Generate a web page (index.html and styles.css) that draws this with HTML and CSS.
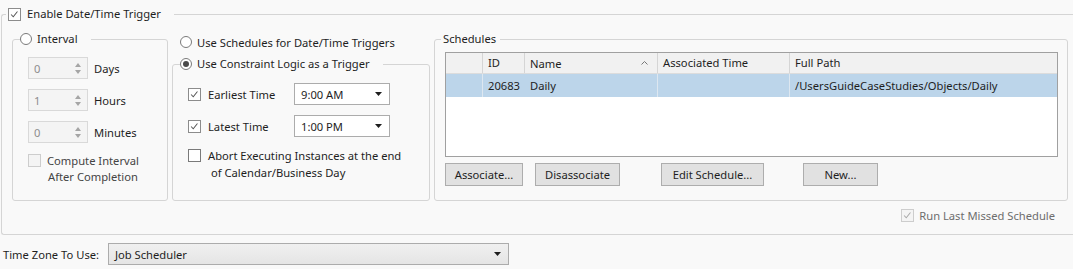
FILE: index.html
```html
<!DOCTYPE html>
<html lang="en">
<head>
  <meta charset="UTF-8">
  <title>Date/Time Trigger</title>
  <link rel="stylesheet" href="styles.css">
</head>
<body>
  <fieldset class="trigger">
    <legend class="trigger-title">
      <span class="cb checked"><svg viewBox="0 0 13 13"><path d="M2.5 6.5 L5 9.2 L10 3"/></svg></span>
      Enable Date/Time Trigger
    </legend>

    <div class="panels">
      <!-- interval (disabled) -->
      <fieldset class="group interval">
        <legend><span class="radio"></span>Interval</legend>
        <div class="spin-row">
          <div class="spin"><span>0</span><span class="arrows"><i class="up"></i><i class="down"></i></span></div>
          <span>Days</span>
        </div>
        <div class="spin-row">
          <div class="spin"><span>1</span><span class="arrows"><i class="up"></i><i class="down"></i></span></div>
          <span>Hours</span>
        </div>
        <div class="spin-row">
          <div class="spin"><span>0</span><span class="arrows"><i class="up"></i><i class="down"></i></span></div>
          <span>Minutes</span>
        </div>
        <div class="compute">
          <span class="cb disabled"></span>
          <span class="compute-text">Compute Interval<br>After Completion</span>
        </div>
      </fieldset>

      <!-- schedules / constraint logic -->
      <div class="logic">
        <div class="radio-row"><span class="radio"></span>Use Schedules for Date/Time Triggers</div>
        <fieldset class="group constraint">
          <legend><span class="radio on"></span>Use Constraint Logic as a Trigger</legend>
          <div class="time-row">
            <span class="time-label"><span class="cb checked"><svg viewBox="0 0 13 13"><path d="M2.5 6.5 L5 9.2 L10 3"/></svg></span>Earliest Time</span>
            <div class="combo">9:00 AM<svg class="caret" viewBox="0 0 7 4"><path d="M0 0 H7 L3.5 4 Z"/></svg></div>
          </div>
          <div class="time-row">
            <span class="time-label"><span class="cb checked"><svg viewBox="0 0 13 13"><path d="M2.5 6.5 L5 9.2 L10 3"/></svg></span>Latest Time</span>
            <div class="combo">1:00 PM<svg class="caret" viewBox="0 0 7 4"><path d="M0 0 H7 L3.5 4 Z"/></svg></div>
          </div>
          <div class="abort">
            <span class="cb"></span>
            <span>Abort Executing Instances at the end<span class="second">of Calendar/Business Day</span></span>
          </div>
        </fieldset>
      </div>

      <!-- schedules list -->
      <fieldset class="group schedules">
        <legend>Schedules</legend>
        <div class="grid">
          <div class="grid-head">
            <span class="c-row"></span>
            <span class="c-id">ID</span>
            <span class="c-name">Name<svg class="sort" viewBox="0 0 7 4"><path d="M0.5 3.5 L3.5 0.5 L6.5 3.5"/></svg></span>
            <span class="c-time">Associated Time</span>
            <span class="c-path">Full Path</span>
          </div>
          <div class="grid-row selected">
            <span class="c-row"></span>
            <span class="c-id">20683</span>
            <span class="c-name">Daily</span>
            <span class="c-time"></span>
            <span class="c-path">/UsersGuideCaseStudies/Objects/Daily</span>
          </div>
        </div>
        <div class="buttons">
          <button class="btn b-assoc">Associate...</button>
          <button class="btn b-dis">Disassociate</button>
          <button class="btn b-edit">Edit Schedule...</button>
          <button class="btn b-new">New...</button>
        </div>
      </fieldset>
    </div>

    <div class="run-last">
      <span class="cb checked disabled"><svg viewBox="0 0 13 13"><path d="M2.5 6.5 L5 9.2 L10 3"/></svg></span>
      Run Last Missed Schedule
    </div>
  </fieldset>

  <div class="tz">
    <span class="tz-label">Time Zone To Use:</span>
    <div class="combo tz-combo">Job Scheduler<svg class="caret" viewBox="0 0 7 4"><path d="M0 0 H7 L3.5 4 Z"/></svg></div>
  </div>
</body>
</html>
```

FILE: styles.css
```css
body {
  margin: 0;
  background: #f9f9f9;
  font-family: "Noto Sans", "Open Sans", sans-serif;
  font-size: 11.2px;
  color: #1e1e1e;
  overflow: hidden;
}

fieldset {
  margin: 0;
  min-width: 0;
  box-sizing: border-box;
  border: 1px solid #d5d5d5;
  border-radius: 3px;
}

legend {
  display: flex;
  align-items: center;
  height: 16px;
  line-height: 16px;
  padding: 0;
}

/* checkbox + radio */
.cb {
  display: inline-block;
  flex: none;
  width: 11px;
  height: 11px;
  border: 1px solid #7a7a7a;
  background: #fff;
  margin-right: 6px;
}

.cb svg {
  display: block;
  width: 11px;
  height: 11px;
  fill: none;
  stroke: #555;
  stroke-width: 1.2;
}

.cb.checked {
  border-color: #8c8c8c;
}

.cb.disabled {
  border-color: #cdcdcd;
  background: #f4f4f4;
}

.cb.disabled svg {
  stroke: #a8a8a8;
}

.radio {
  display: inline-block;
  flex: none;
  width: 10px;
  height: 10px;
  border: 1px solid #7a7a7a;
  border-radius: 50%;
  background: #fff;
  margin-right: 5px;
  position: relative;
}

.radio.on::after {
  content: "";
  position: absolute;
  left: 2px;
  top: 2px;
  width: 6px;
  height: 6px;
  border-radius: 50%;
  background: #4a4a4a;
}

/* outer group */
.trigger {
  margin: 6px 0 0 1px;
  padding: 0 0 0 10px;
  height: 229px;
  border-right: 0;
  border-radius: 3px 0 0 3px;
}

.trigger-title {
  margin-left: -6px;
  padding: 0 13px 0 2px;
}

.panels {
  display: flex;
  gap: 4px;
  height: 170px;
  margin-top: 9px;
}

/* interval */
.interval {
  width: 156px;
  padding: 10px 0 0 15px;
}

.interval legend {
  margin-left: -8px;
  padding-right: 13px;
}

.spin-row {
  display: flex;
  align-items: center;
  gap: 6px;
  height: 22px;
  margin-bottom: 10px;
}

.spin {
  display: flex;
  align-items: center;
  justify-content: space-between;
  box-sizing: border-box;
  width: 60px;
  height: 22px;
  padding: 0 6px 0 5px;
  border: 1px solid #d9d9d9;
  background: #f4f4f4;
  color: #8d8d8d;
}

.arrows {
  display: flex;
  flex-direction: column;
  gap: 3px;
}

.arrows i {
  display: block;
  width: 0;
  height: 0;
  border-left: 3px solid transparent;
  border-right: 3px solid transparent;
}

.arrows .up {
  border-bottom: 4px solid #a5a5a5;
}

.arrows .down {
  border-top: 4px solid #a5a5a5;
}

.compute {
  display: flex;
  align-items: flex-start;
  margin-top: 1px;
  line-height: 16px;
  color: #444;
}

.compute .cb {
  margin-top: 1px;
}

.compute-text {
  text-align: center;
}

/* logic column */
.logic {
  display: flex;
  flex-direction: column;
  width: 258px;
}

.radio-row {
  display: flex;
  align-items: center;
  height: 16px;
  margin: 3px 0 6px 8px;
}

.constraint {
  flex: 1;
  padding: 11px 0 0 15px;
}

.constraint legend {
  margin-left: -8px;
  padding-right: 13px;
}

.time-row {
  display: flex;
  align-items: center;
  height: 22px;
  margin-bottom: 10px;
}

.time-label {
  display: flex;
  align-items: center;
  width: 106px;
}

.time-label .cb {
  margin-right: 7px;
}

.combo {
  display: flex;
  align-items: center;
  justify-content: space-between;
  box-sizing: border-box;
  width: 96px;
  height: 22px;
  padding: 0 7px 0 6px;
  border: 1px solid #acacac;
  background: #fff;
}

.caret {
  width: 7px;
  height: 4px;
  fill: #1e1e1e;
}

.abort {
  display: flex;
  align-items: flex-start;
  line-height: 17px;
}

.abort .cb {
  margin: 2px 7px 0 0;
}

.abort .second {
  display: block;
  padding-left: 3px;
}

/* schedules */
.schedules {
  width: 634px;
  padding: 5px 9px 0 10px;
}

.schedules legend {
  margin-left: -4px;
  padding: 0 4px 0 2px;
}

.grid {
  box-sizing: border-box;
  height: 105px;
  border: 1px solid #a0a0a0;
  background: #fff;
}

.grid-head,
.grid-row {
  display: flex;
}

.grid-head {
  height: 20px;
  line-height: 19px;
  background: #f1f1f1;
  border-bottom: 1px solid #dcdcdc;
}

.grid-head span {
  border-left: 1px solid #d5d5d5;
}

.grid-head span:first-child {
  border-left: 0;
}

.grid-row {
  height: 23px;
  line-height: 23px;
}

.grid-row.selected {
  background: #bcd5ea;
}

.grid-row .c-id,
.grid-row .c-time,
.grid-row .c-path {
  border-left: 1px solid #dde7f0;
}

.grid-row .c-name {
  border-left: 1px solid transparent;
}

.grid span {
  box-sizing: border-box;
  padding-left: 5px;
  white-space: nowrap;
}

.c-row { width: 36px; }
.c-id { width: 42px; }
.c-name { width: 133px; }
.c-time { width: 132px; }
.c-path { flex: 1; }

.grid-head .c-name {
  display: flex;
  align-items: center;
  justify-content: space-between;
  padding-right: 9px;
}

.sort {
  width: 7px;
  height: 4px;
  fill: none;
  stroke: #777;
  stroke-width: 1;
}

.buttons {
  display: flex;
  margin-top: 6px;
}

.btn {
  box-sizing: border-box;
  height: 23px;
  padding: 0;
  border: 1px solid #adadad;
  background: #e1e1e1;
  font: inherit;
  color: #1e1e1e;
}

.b-assoc { width: 78px; }
.b-dis { width: 85px; margin-left: 12px; }
.b-edit { width: 103px; margin-left: 41px; }
.b-new { width: 75px; margin-left: 39px; }

.run-last {
  display: flex;
  align-items: center;
  justify-content: flex-end;
  height: 17px;
  margin: 6px 18px 0 0;
  color: #6d6d6d;
}

.run-last .cb {
  margin-right: 5px;
}

/* time zone */
.tz {
  display: flex;
  align-items: center;
  margin: 8px 0 0 3px;
}

.tz-label {
  width: 105px;
}

.tz-combo {
  width: 401px;
  background: linear-gradient(#f0f0f0, #e5e5e5);
}
```
